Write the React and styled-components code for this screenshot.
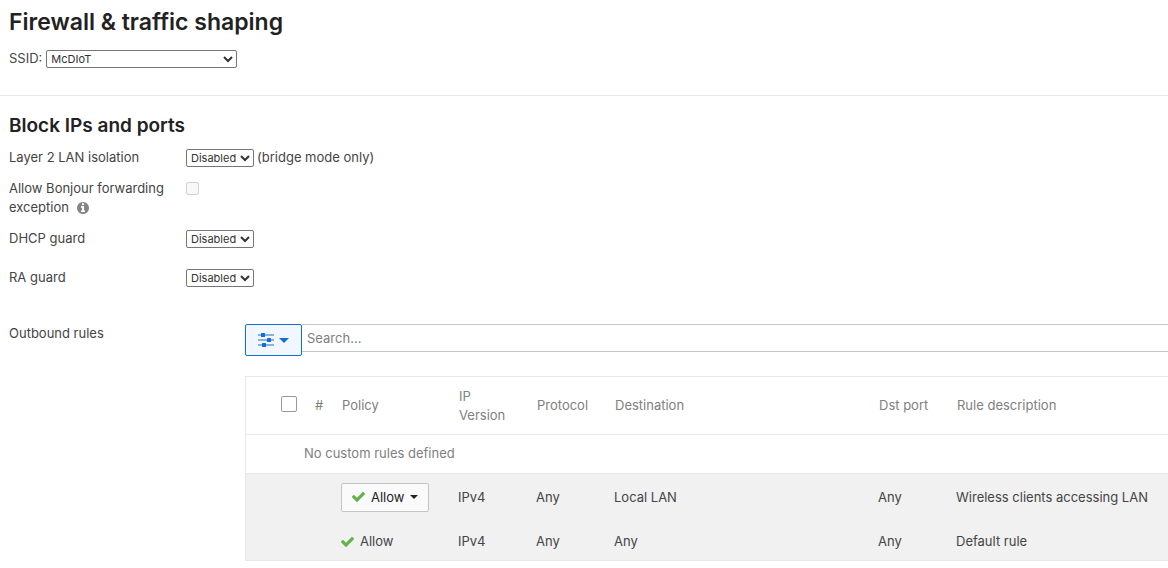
import React from "react";
import styled, { createGlobalStyle } from "styled-components";

const GlobalStyle = createGlobalStyle`
  * {
    box-sizing: border-box;
  }

  body {
    margin: 0;
    background: #fff;
    color: #444;
    font-family: Inter, "Liberation Sans", sans-serif;
    font-size: 13px;
    line-height: 19px;
  }
`;

const Header = styled.header`
  padding: 8px 9px 27px;
  border-bottom: 1px solid #e8e8e8;
`;

const Title = styled.h1`
  margin: 0 0 13px;
  color: #222;
  font-size: 23px;
  font-weight: 600;
  line-height: 28px;
`;

const SsidRow = styled.div`
  display: flex;
  align-items: center;
  gap: 4px;
  height: 19px;
`;

const Select = styled.select`
  width: ${(props) => (props.$wide ? "191px" : "68px")};
  height: 18px;
  margin: 0;
  padding: 0;
  border: 1px solid #767676;
  border-radius: 2px;
  background-color: #fff;
  color: #333;
  font-family: inherit;
  font-size: 11px;
`;

const Main = styled.main`
  padding: 18px 0 7px 9px;
`;

const SectionTitle = styled.h2`
  margin: 0 0 10px;
  color: #222;
  font-size: 19px;
  font-weight: 600;
  line-height: 24px;
`;

const Setting = styled.div`
  display: grid;
  grid-template-columns: 160px 1fr;
  column-gap: 17px;
  align-items: start;
  min-height: ${(props) => (props.$tall ? "27px" : "19px")};
  margin-bottom: 12px;
`;

const Control = styled.div`
  display: flex;
  align-items: center;
  gap: 3px;
  height: 19px;
`;

const InfoSvg = styled.svg`
  width: 12px;
  height: 12px;
  margin-left: 4px;
  fill: #858585;
  vertical-align: -2px;
`;

const Checkbox = styled.input`
  display: block;
  width: 13px;
  height: 13px;
  margin: 0;
`;

const SelectAll = styled.input`
  appearance: none;
  display: block;
  width: 16px;
  height: 16px;
  margin: 0;
  border: 1px solid #999;
  border-radius: 2px;
  background: #fff;

  &:checked {
    background: #1170cf;
  }
`;

const Outbound = styled.section`
  display: grid;
  grid-template-columns: 236px minmax(0, 1fr);
  margin-top: 29px;
`;

const Label = styled.h3`
  margin: 0;
  font-size: 13px;
  font-weight: 400;
  line-height: 19px;
`;

const SearchBar = styled.div`
  display: flex;
  align-items: flex-start;
  margin-bottom: 20px;
`;

const FilterButton = styled.button`
  display: flex;
  align-items: center;
  justify-content: center;
  gap: 5px;
  flex: none;
  width: 57px;
  height: 32px;
  padding: 0;
  border: 1px solid #1170cf;
  border-radius: 2px;
  background: #f2f7ff;
  color: #1170cf;
`;

const SearchInput = styled.input`
  flex: 1;
  min-width: 0;
  height: 28px;
  padding: 0 5px;
  border: 1px solid #c4c4c4;
  border-width: 1px 0;
  color: #444;
  font-family: inherit;
  font-size: 13px;

  &::placeholder {
    color: #808080;
  }
`;

const RulesTable = styled.table`
  width: 100%;
  table-layout: fixed;
  border: 1px solid #e8e8e8;
  border-right: none;
  border-spacing: 0;
`;

const Col = styled.col`
  width: ${(props) => props.$width || "auto"};
`;

const HeadCell = styled.th`
  height: 58px;
  padding: ${(props) => (props.$check ? "0 0 3px 35px" : "0 0 0 6px")};
  border-bottom: 1px solid #e8e8e8;
  color: #808080;
  font-weight: 400;
  text-align: left;
`;

const EmptyCell = styled.td`
  height: 39px;
  padding: 0 0 1px 58px;
  border-bottom: 1px solid #e8e8e8;
  color: #808080;
`;

const RuleRow = styled.tr`
  height: ${(props) => (props.$editable ? "47px" : "39px")};
  background: #f1f1f1;
`;

const Cell = styled.td`
  padding: ${(props) => (props.$low ? "2px 0 0 5px" : "0 0 0 5px")};
`;

const Policy = styled.span`
  display: flex;
  align-items: center;
  gap: 6px;
`;

const PolicyButton = styled.button`
  display: flex;
  align-items: center;
  gap: 6px;
  height: 29px;
  padding: 0 10px 1px;
  border: 1px solid #c4c4c4;
  border-radius: 2px;
  background: #fafafa;
  color: #222;
  font-family: inherit;
  font-size: 13px;
`;

const Check = () => (
  <svg width="13" height="10" viewBox="121 344 1550 1192" fill="#63b346" aria-hidden="true">
    <path d="M1671 566q0 40-28 68l-724 724-136 136q-28 28-68 28t-68-28l-136-136-362-362q-28-28-28-68t28-68l136-136q28-28 68-28t68 28l294 295 656-657q28-28 68-28t68 28l136 136q28 28 28 68z" />
  </svg>
);

const InfoIcon = () => (
  <InfoSvg viewBox="128 128 1536 1536" aria-hidden="true">
    <path d="M1152 1376v-160q0-14-9-23t-23-9h-96v-512q0-14-9-23t-23-9h-320q-14 0-23 9t-9 23v160q0 14 9 23t23 9h96v320h-96q-14 0-23 9t-9 23v160q0 14 9 23t23 9h448q14 0 23-9t9-23zm-128-896v-160q0-14-9-23t-23-9h-192q-14 0-23 9t-9 23v160q0 14 9 23t23 9h192q14 0 23-9t9-23zm640 416q0 209-103 385.5t-279.5 279.5-385.5 103-385.5-103-279.5-279.5-103-385.5 103-385.5 279.5-279.5 385.5-103 385.5 103 279.5 279.5 103 385.5z" />
  </InfoSvg>
);

const Caret = ({ width, height }) => (
  <svg width={width} height={height} viewBox="0 0 10 5" preserveAspectRatio="none" aria-hidden="true">
    <path d="M0 0h10L5 5z" fill="currentColor" />
  </svg>
);

const SlidersIcon = () => (
  <svg width="16" height="14" viewBox="0 0 16 14" fill="currentColor" aria-hidden="true">
    <path d="M0 1.4h16v1.2H0zM0 6.4h16v1.2H0zM0 11.4h16v1.2H0z" />
    <rect x="3" y="0" width="4" height="4" rx="0.5" />
    <rect x="9" y="5" width="4" height="4" rx="0.5" />
    <rect x="4" y="10" width="4" height="4" rx="0.5" />
  </svg>
);

const columns = ["63px", "27px", "117px", "78px", "78px", "264px", "78px", null];

const rules = [
  {
    policy: "Allow",
    version: "IPv4",
    protocol: "Any",
    destination: "Local LAN",
    port: "Any",
    description: "Wireless clients accessing LAN",
    editable: true,
  },
  {
    policy: "Allow",
    version: "IPv4",
    protocol: "Any",
    destination: "Any",
    port: "Any",
    description: "Default rule",
    editable: false,
  },
];

const GuardSelect = ({ id }) => (
  <Select id={id} defaultValue="Disabled">
    <option>Disabled</option>
    <option>Enabled</option>
  </Select>
);

const App = () => {
  return (
    <>
      <GlobalStyle />
      <Header>
        <Title>Firewall &amp; traffic shaping</Title>
        <SsidRow>
          <label htmlFor="ssid">SSID:</label>
          <Select id="ssid" $wide>
            <option>McDIoT</option>
          </Select>
        </SsidRow>
      </Header>
      <Main>
        <SectionTitle>Block IPs and ports</SectionTitle>
        <Setting>
          <label htmlFor="isolation">Layer 2 LAN isolation</label>
          <Control>
            <GuardSelect id="isolation" />
            <span>(bridge mode only)</span>
          </Control>
        </Setting>
        <Setting>
          <label htmlFor="bonjour">
            Allow Bonjour forwarding exception <InfoIcon />
          </label>
          <Control>
            <Checkbox id="bonjour" type="checkbox" disabled />
          </Control>
        </Setting>
        <Setting $tall>
          <label htmlFor="dhcp">DHCP guard</label>
          <Control>
            <GuardSelect id="dhcp" />
          </Control>
        </Setting>
        <Setting $tall>
          <label htmlFor="ra">RA guard</label>
          <Control>
            <GuardSelect id="ra" />
          </Control>
        </Setting>
        <Outbound>
          <Label>Outbound rules</Label>
          <div>
            <SearchBar>
              <FilterButton type="button" aria-label="Filter rules">
                <SlidersIcon />
                <Caret width={10} height={5} />
              </FilterButton>
              <SearchInput type="text" placeholder="Search..." aria-label="Search rules" />
            </SearchBar>
            <RulesTable>
              <colgroup>
                {columns.map((width, i) => (
                  <Col key={i} $width={width} />
                ))}
              </colgroup>
              <thead>
                <tr>
                  <HeadCell $check>
                    <SelectAll type="checkbox" aria-label="Select all rules" />
                  </HeadCell>
                  <HeadCell>#</HeadCell>
                  <HeadCell>Policy</HeadCell>
                  <HeadCell>
                    IP
                    <br />
                    Version
                  </HeadCell>
                  <HeadCell>Protocol</HeadCell>
                  <HeadCell>Destination</HeadCell>
                  <HeadCell>Dst port</HeadCell>
                  <HeadCell>Rule description</HeadCell>
                </tr>
              </thead>
              <tbody>
                <tr>
                  <EmptyCell colSpan={8}>No custom rules defined</EmptyCell>
                </tr>
                {rules.map((rule) => (
                  <RuleRow key={rule.description} $editable={rule.editable}>
                    <Cell />
                    <Cell />
                    <Cell $low={!rule.editable}>
                      {rule.editable ? (
                        <PolicyButton type="button">
                          <Check />
                          {rule.policy}
                          <Caret width={8} height={4} />
                        </PolicyButton>
                      ) : (
                        <Policy>
                          <Check />
                          {rule.policy}
                        </Policy>
                      )}
                    </Cell>
                    <Cell $low={!rule.editable}>{rule.version}</Cell>
                    <Cell $low={!rule.editable}>{rule.protocol}</Cell>
                    <Cell $low={!rule.editable}>{rule.destination}</Cell>
                    <Cell $low={!rule.editable}>{rule.port}</Cell>
                    <Cell $low={!rule.editable}>{rule.description}</Cell>
                  </RuleRow>
                ))}
              </tbody>
            </RulesTable>
          </div>
        </Outbound>
      </Main>
    </>
  );
};

export default App;
